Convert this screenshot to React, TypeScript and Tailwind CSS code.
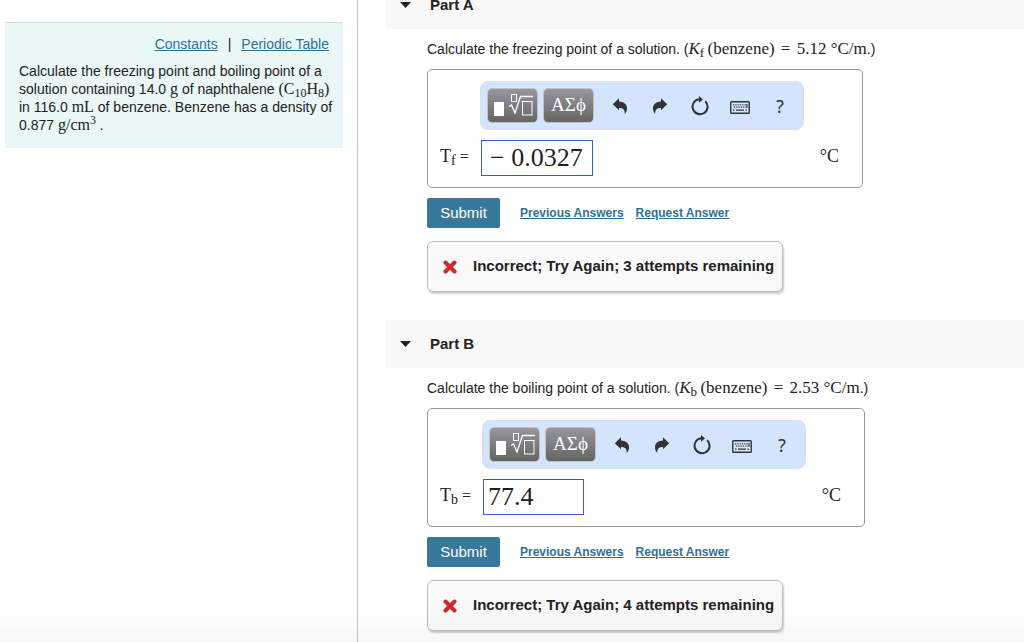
import type { ReactNode } from "react";

const serif = "font-['Liberation_Serif',serif]";

interface PartProps {
  id: string;
  title: string;
  prompt: ReactNode;
  symbol: string;
  subscript: string;
  answer: string;
  gridClass: string;
  inputClass: string;
  attempts: number;
}

function UndoIcon({ className = "" }: { className?: string }) {
  return (
    <svg viewBox="0 0 16 16" className={`h-4 w-4 fill-[#333] ${className}`} aria-hidden="true">
      <path d="M0.800 6.200 7 0.300v3.300c5.200.2 8 2.900 8 6.700 0 2.300-.8 4.200-2.300 5.600.4-3.900-1.200-6-5.700-6v2.400z" />
    </svg>
  );
}

function ResetIcon() {
  return (
    <svg viewBox="0 0 20 20" className="h-5 w-5" aria-hidden="true">
      <path d="M15.200 5.200a7.500 7.500 0 1 1-5.700-2" fill="none" stroke="#333" strokeWidth="2" />
      <path d="M9 0 13 3.400 9 6.800z" fill="#333" />
    </svg>
  );
}

function KeyboardIcon() {
  return (
    <svg viewBox="0 0 20 13" className="mt-1 h-[13px] w-5" aria-hidden="true">
      <rect x="0.750" y="0.750" width="18.500" height="11.500" rx="0.800" fill="none" stroke="#333" strokeWidth="1.400" />
      <path d="M3 3.800h13M4 6.200h12" stroke="#333" strokeWidth="1.200" strokeDasharray="1.200 1.100" />
      <path d="M17 3v4M3 9.200h1.500M6 9.200h8M15.500 9.200H17" stroke="#333" strokeWidth="1.200" fill="none" />
    </svg>
  );
}

function TemplateIcon() {
  return (
    <svg viewBox="0 0 40 26" className="h-[26px] w-10" fill="none" stroke="#fff" aria-hidden="true">
      <rect x="1" y="9" width="10" height="14" fill="#fff" stroke="none" />
      <rect x="18.500" y="1.500" width="5" height="7" />
      <path d="M16 13.500l2.500-1.500 3.500 8 5.500-16.500H40" strokeWidth="1.300" />
      <rect x="29.500" y="8.500" width="9.500" height="13.500" />
    </svg>
  );
}

const darkButton =
  "flex h-[35px] w-[51px] items-center justify-center rounded-[5px] border border-[#c4c1bd] bg-linear-to-b from-[#98969f] to-[#656565] text-white";

function Toolbar() {
  return (
    <div className="flex h-[49px] w-[324px] items-center rounded-lg border border-[#dcdfe3] bg-[#d3e5fe] pl-[6px]">
      <button type="button" aria-label="Templates" className={darkButton}>
        <TemplateIcon />
      </button>
      <button
        type="button"
        aria-label="Greek symbols"
        className={`${darkButton} ml-[5px] font-['Liberation_Serif',serif] text-[19px]`}
      >
        ΑΣϕ
      </button>
      <div className="ml-[6px] flex items-center">
        <button type="button" aria-label="Undo" className="flex w-10 justify-center">
          <UndoIcon />
        </button>
        <button type="button" aria-label="Redo" className="flex w-10 justify-center">
          <UndoIcon className="-scale-x-100" />
        </button>
        <button type="button" aria-label="Reset" className="flex w-10 justify-center">
          <ResetIcon />
        </button>
        <button type="button" aria-label="Keyboard shortcuts" className="flex w-10 justify-center">
          <KeyboardIcon />
        </button>
        <button
          type="button"
          aria-label="Help"
          className="w-10 font-['Noto_Sans',sans-serif] text-lg leading-6 text-[#333]"
        >
          ?
        </button>
      </div>
    </div>
  );
}

function Part({ id, title, prompt, symbol, subscript, answer, gridClass, inputClass, attempts }: PartProps) {
  return (
    <section className="pb-7">
      <h2 className="flex h-12 items-center bg-[#f8f8f8] pl-[15px] text-[15px] font-bold">
        <svg viewBox="0 0 11 6" className="mr-[19px] h-[6px] w-[11px] fill-[#222]" aria-hidden="true">
          <path d="M0 0h11L5.500 6z" />
        </svg>
        {title}
      </h2>
      <div className="pl-[42px]">
        <p className="flex h-10 items-center text-sm whitespace-pre">{prompt}</p>

        <div className="w-fit rounded-[5px] border border-[#999] py-[11px] pr-[23px] pl-3">
          <div className={`grid items-center gap-y-[10px] ${gridClass}`}>
            <div className="col-start-2">
              <Toolbar />
            </div>
            <label htmlFor={id} className={`col-start-1 pb-1 text-lg leading-6 ${serif}`}>
              {symbol}
              <sub className="text-sm leading-none">{subscript}</sub>
              <span className="text-base"> =</span>
            </label>
            <input
              id={id}
              type="text"
              defaultValue={answer}
              className={`ml-px h-9 border border-[#3a5fcd] bg-white pb-0.5 text-[26px] outline-none ${serif} ${inputClass}`}
            />
            <span className={`pb-1 text-right text-lg leading-6 ${serif}`}>°C</span>
          </div>
        </div>

        <div className="mt-[10px] flex items-center">
          <button type="button" className="h-[30px] w-[73px] rounded-xs bg-[#38789a] text-[15px] text-white">
            Submit
          </button>
          <a href="#previous" className="ml-5 text-xs font-bold text-[#2f7195] underline">
            Previous Answers
          </a>
          <a href="#request" className="ml-3 text-xs font-bold text-[#2f7195] underline">
            Request Answer
          </a>
        </div>

        <div className="mt-[13px] flex h-[51px] w-[356px] items-center rounded-md border border-[#bbb] bg-[#f9f9f9] pl-[15px] text-[15px] font-bold whitespace-nowrap shadow-[1px_2px_2px_rgba(0,0,0,0.2)]">
          <svg viewBox="0 0 14 14" className="mr-4 h-[14px] w-[14px]" aria-hidden="true">
            <path d="M2.500 2.500l9 9M11.500 2.500l-9 9" stroke="#cb2a2f" strokeWidth="4" strokeLinecap="round" />
          </svg>
          Incorrect; Try Again; {attempts} attempts remaining
        </div>
      </div>
    </section>
  );
}

function Prompt({ kind, sub, value }: { kind: string; sub: string; value: string }) {
  return (
    <span>
      Calculate the {kind} point of a solution. (
      <span className={`text-[17px] ${serif}`}>
        <i>K</i>
        <sub className="text-[13px] leading-none">{sub}</sub>
        {"\u2009(benzene)"}
        <span className="mx-0.5"> = </span>
        {value} °C/m
      </span>
      .)
    </span>
  );
}

export default function App() {
  return (
    <div className="relative flex h-screen overflow-hidden bg-white font-['Liberation_Sans',Arial,sans-serif] text-[#222]">
      <aside className="w-[358px] shrink-0 border-r border-[#bfc6d0] pt-[22px] pr-[14px] pl-[5px]">
        <div className="border-t border-[#d5dbdb] bg-[#e9f7f6] px-[14px] pt-[11px] pb-[14px] text-sm">
          <div className="flex justify-end gap-[10px] leading-5">
            <a href="#constants" className="text-[#2f7195] underline">
              Constants
            </a>
            <span>|</span>
            <a href="#periodic-table" className="text-[#2f7195] underline">
              Periodic Table
            </a>
          </div>
          <p className="mt-2 leading-[18px] whitespace-nowrap">
            Calculate the freezing point and boiling point of a<br />
            solution containing 14.0 <span className={`text-base leading-none ${serif}`}>g</span> of naphthalene{" "}
            <span className={`text-base leading-none ${serif}`}>
              (C<sub className="text-xs leading-none">10</sub>H<sub className="text-xs leading-none">8</sub>)
            </span>
            <br />
            in 116.0 <span className={`text-base leading-none ${serif}`}>mL</span> of benzene. Benzene has a density of
            <br />
            0.877{" "}
            <span className={`text-base leading-none ${serif}`}>
              g/cm<sup className="text-xs leading-none">3</sup>
            </span>{" "}
            .
          </p>
        </div>
      </aside>

      {/* Pane is scrolled slightly past the first heading */}
      <main className="-mt-[19px] ml-[27px] min-w-0 flex-1">
        <Part
          id="freezing"
          title="Part A"
          prompt={<Prompt kind="freezing" sub="f" value="5.12" />}
          symbol="T"
          subscript="f"
          answer="− 0.0327"
          gridClass="grid-cols-[40px_324px_35px]"
          inputClass="w-28 pl-2"
          attempts={3}
        />
        <Part
          id="boiling"
          title="Part B"
          prompt={<Prompt kind="boiling" sub="b" value="2.53" />}
          symbol="T"
          subscript="b"
          answer="77.4"
          gridClass="grid-cols-[42px_324px_35px]"
          inputClass="w-[101px] pl-1"
          attempts={4}
        />
      </main>

      <div className="pointer-events-none absolute inset-x-0 bottom-0 h-10 bg-linear-to-b from-transparent to-black/3" />
    </div>
  );
}
